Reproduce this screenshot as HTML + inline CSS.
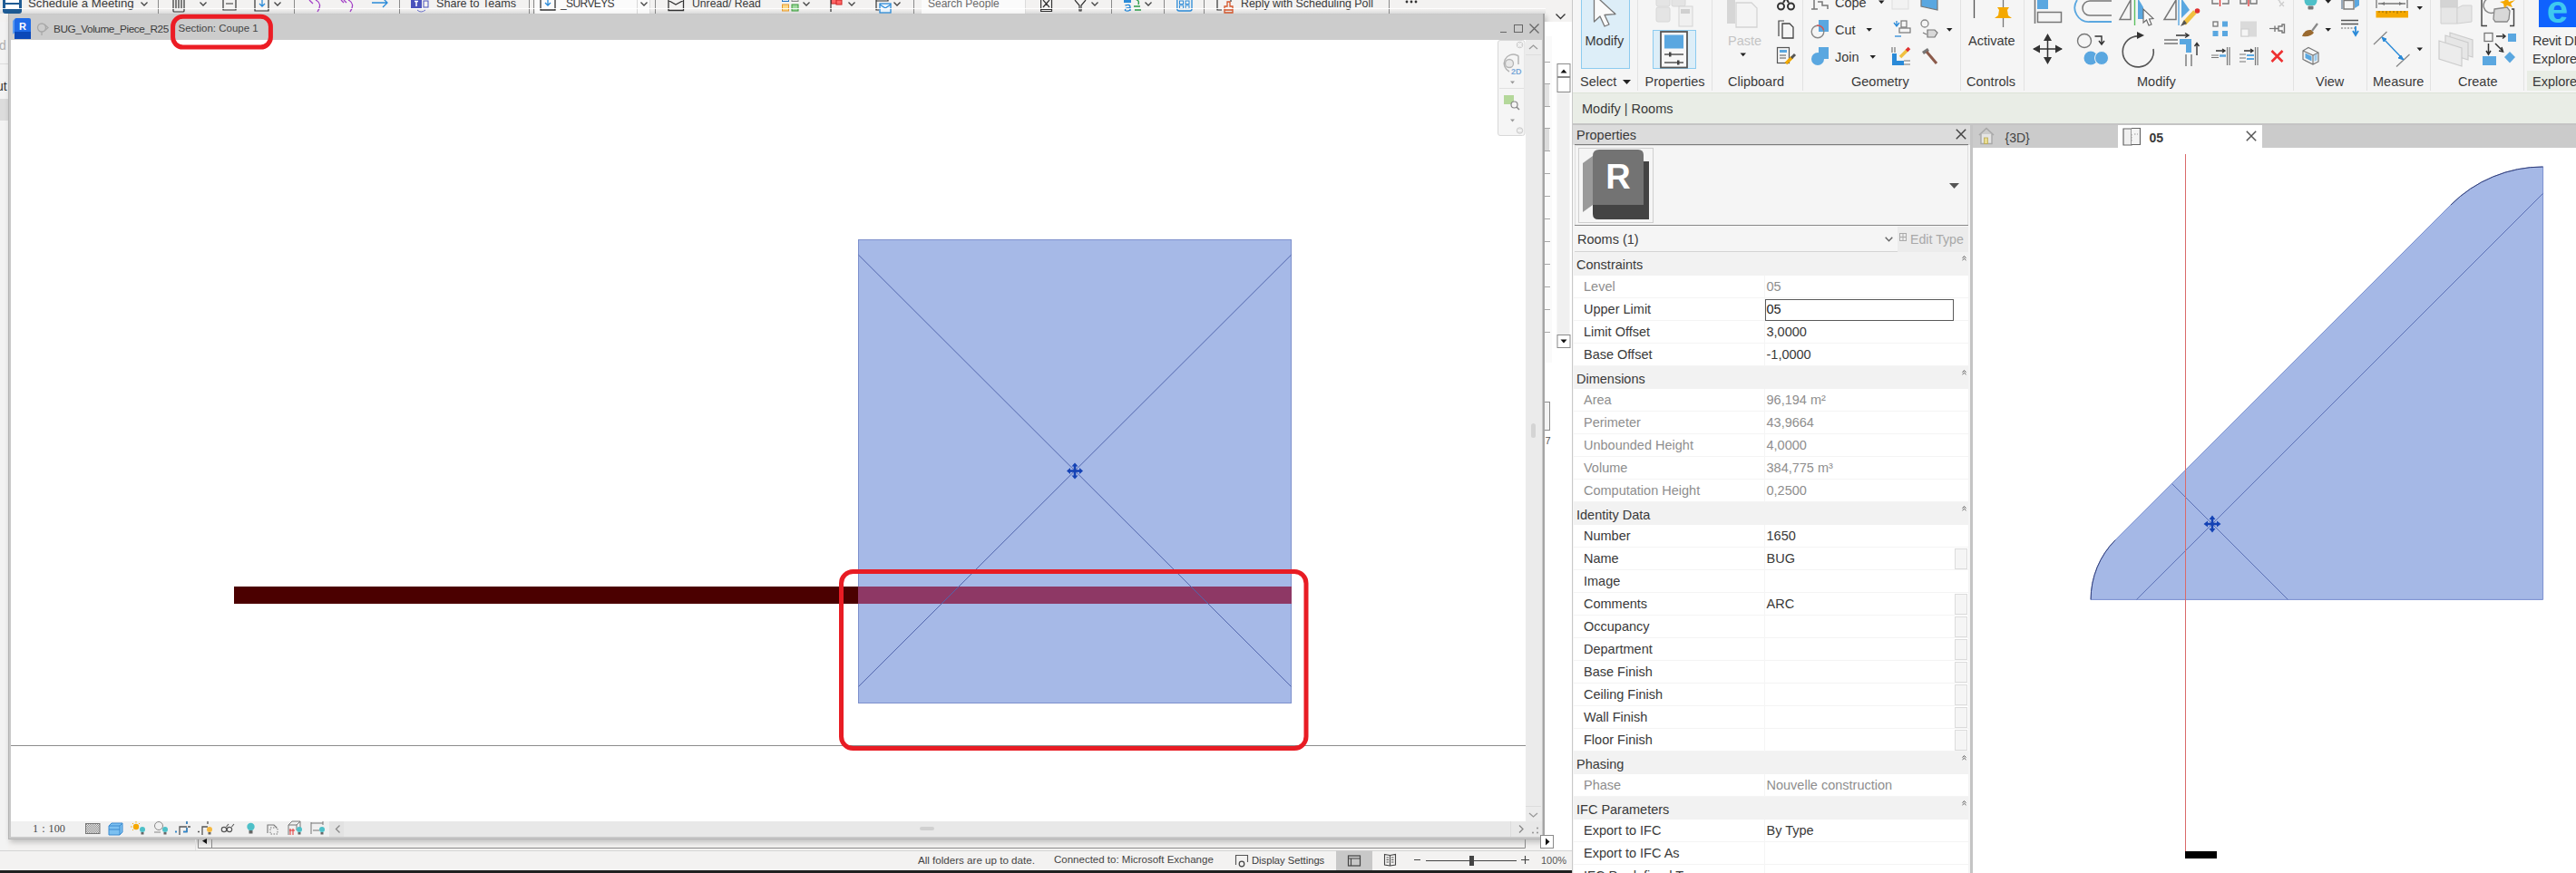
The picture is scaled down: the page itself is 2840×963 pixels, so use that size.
<!DOCTYPE html>
<html><head><meta charset="utf-8">
<style>
*{margin:0;padding:0;box-sizing:border-box}
html,body{width:2840px;height:963px;overflow:hidden;background:#f3f2f1;font-family:"Liberation Sans",sans-serif;color:#393939;position:relative}
.a{position:absolute}
.t{position:absolute;white-space:pre;line-height:1}
</style></head><body>

<!-- Outlook toolbar strip -->
<div class="a" id="olk" style="left:0;top:0;width:1733px;height:24px;background:#f3f2f1"></div>


<!-- outlook toolbar -->
<div class="a" style="left:0;top:10px;width:1704px;height:5px;background:linear-gradient(#f0efee,#e2e2e2)"></div>
<svg class="a" style="left:3px;top:0" width="21" height="15" viewBox="0 0 21 15"><path d="M0 0 L0 12 Q0 15 3 15 L18 15 Q21 15 21 12 L21 0Z" fill="#1e5b94"/><rect x="3" y="0" width="15" height="3" fill="#fff"/><rect x="3" y="5" width="15" height="5" fill="#fff"/></svg>
<div class="t" style="left:31px;top:-2.67px;font-size:13.2px;color:#393939;">Schedule a Meeting</div>
<svg class="a" style="left:155px;top:2px" width="8" height="5" viewBox="0 0 8 5"><path d="M0.5 0.5 L4 4 L7.5 0.5" fill="none" stroke="#444" stroke-width="1.3"/></svg>
<div class="a" style="left:174px;top:0;width:1px;height:15px;background:#8a8a8a"></div>
<svg class="a" style="left:190px;top:0" width="14" height="14" viewBox="0 0 14 14"><path d="M1 0 L1 12 Q1 13 2 13 L12 13 Q13 13 13 12 L13 0 M4 0 L4 10 M7 0 L7 10 M10 0 L10 10" fill="none" stroke="#333" stroke-width="1.2"/></svg>
<svg class="a" style="left:220px;top:2px" width="8" height="5" viewBox="0 0 8 5"><path d="M0.5 0.5 L4 4 L7.5 0.5" fill="none" stroke="#444" stroke-width="1.3"/></svg>
<svg class="a" style="left:245px;top:0" width="16" height="12" viewBox="0 0 16 12"><path d="M1 0 L1 11 L15 11 L15 0 M4 4 L12 4" fill="none" stroke="#333" stroke-width="1.2"/></svg>
<svg class="a" style="left:280px;top:0" width="18" height="13" viewBox="0 0 18 13"><path d="M1 0 L1 12 L16 12 L16 0" fill="none" stroke="#333" stroke-width="1.2"/><path d="M9 0 L9 7 M6 4 L9 7 L12 4" fill="none" stroke="#2a8ad8" stroke-width="1.3"/></svg>
<svg class="a" style="left:302px;top:2px" width="8" height="5" viewBox="0 0 8 5"><path d="M0.5 0.5 L4 4 L7.5 0.5" fill="none" stroke="#444" stroke-width="1.3"/></svg>
<div class="a" style="left:324px;top:0;width:1px;height:15px;background:#8a8a8a"></div>
<svg class="a" style="left:339px;top:0" width="19" height="14" viewBox="0 0 19 14"><path d="M2 0 L6 4 M9 0 Q17 4 11 13" fill="none" stroke="#a23fc6" stroke-width="1.3"/></svg>
<svg class="a" style="left:374px;top:0" width="20" height="14" viewBox="0 0 20 14"><path d="M2 0 L5 3 M5 0 L8 3 M10 0 Q18 4 12 13" fill="none" stroke="#a23fc6" stroke-width="1.3"/></svg>
<svg class="a" style="left:410px;top:0" width="19" height="10" viewBox="0 0 19 10"><path d="M0 3 L17 3 M12 -2 L17 3 L12 8" fill="none" stroke="#2a8ad8" stroke-width="1.3"/></svg>
<div class="a" style="left:440px;top:0;width:1px;height:15px;background:#8a8a8a"></div>
<svg class="a" style="left:453px;top:0" width="21" height="15" viewBox="0 0 21 15"><rect x="0" y="0" width="12" height="9" fill="#4b53bc"/><rect x="14" y="1" width="5" height="7" fill="none" stroke="#4b53bc" stroke-width="1"/><path d="M7 11 Q11 15 16 11" fill="none" stroke="#6b72cc" stroke-width="1"/><path d="M4 1.5 L8 1.5 M6 1.5 L6 7" stroke="#fff" stroke-width="1.5"/></svg>
<div class="t" style="left:481px;top:-2.17px;font-size:12.6px;color:#393939;">Share to Teams</div>
<div class="a" style="left:583px;top:0;width:1px;height:15px;background:#8a8a8a"></div>
<div class="a" style="left:588px;top:0;width:1px;height:15px;background:#8a8a8a"></div>
<div class="a" style="left:590px;top:0;width:127px;height:15px;background:#fbfbfb;border-right:1px solid #dcdcdc"></div>
<svg class="a" style="left:595px;top:0" width="19" height="13" viewBox="0 0 19 13"><path d="M1 0 L1 11 L17 11 L17 0" fill="none" stroke="#333" stroke-width="1.3"/><path d="M9 0 L9 6 M6 3 L9 6 L12 3" fill="none" stroke="#2a8ad8" stroke-width="1.3"/></svg>
<div class="t" style="left:618px;top:-1.66px;font-size:12px;color:#393939;letter-spacing:-0.6px">_SURVEYS</div>
<div class="a" style="left:702px;top:0;width:1px;height:15px;background:#d8d8d8"></div>
<svg class="a" style="left:706px;top:2px" width="8" height="5" viewBox="0 0 8 5"><path d="M0.5 0.5 L4 4 L7.5 0.5" fill="none" stroke="#444" stroke-width="1.3"/></svg>
<div class="a" style="left:722px;top:0;width:1px;height:15px;background:#8a8a8a"></div>
<svg class="a" style="left:736px;top:0" width="19" height="13" viewBox="0 0 19 13"><path d="M1 0 L1 11.5 L17.5 11.5 L17.5 0 M1 0.5 L9 5 L17.5 0.5" fill="none" stroke="#333" stroke-width="1.3"/></svg>
<div class="t" style="left:763px;top:-1.83px;font-size:12.2px;color:#393939;">Unread/ Read</div>
<svg class="a" style="left:862px;top:0" width="20" height="14" viewBox="0 0 20 14"><rect x="0.5" y="-2" width="7" height="3.5" fill="#d8e8f8" stroke="#2a78c8"/><rect x="11" y="-2" width="7" height="3.5" fill="#ddd" stroke="#888"/><rect x="0.5" y="5" width="7" height="7" fill="#fbd98a" stroke="#e89a30"/><rect x="11" y="5" width="7" height="7" fill="#9ed89e" stroke="#3a9a3a"/></svg>
<svg class="a" style="left:885px;top:2px" width="8" height="5" viewBox="0 0 8 5"><path d="M0.5 0.5 L4 4 L7.5 0.5" fill="none" stroke="#444" stroke-width="1.3"/></svg>
<svg class="a" style="left:915px;top:0" width="14" height="14" viewBox="0 0 14 14"><rect x="1.5" y="-2" width="6" height="6" fill="#f66" stroke="#c22" stroke-width="1"/><rect x="7" y="0" width="6" height="5" fill="#f66" stroke="#c22" stroke-width="1"/><path d="M1 0 L1 13" stroke="#333" stroke-width="1.2"/></svg>
<svg class="a" style="left:935px;top:2px" width="8" height="5" viewBox="0 0 8 5"><path d="M0.5 0.5 L4 4 L7.5 0.5" fill="none" stroke="#444" stroke-width="1.3"/></svg>
<svg class="a" style="left:965px;top:0" width="18" height="15" viewBox="0 0 18 15"><path d="M1 0 L1 11 L4 11 M1 1 L14 1 L14 0" fill="none" stroke="#333" stroke-width="1.2"/><rect x="5" y="4" width="12" height="10" fill="#e8f3fb" stroke="#2a8ad8" stroke-width="1.3"/><path d="M5 5 L11 9 L17 5" fill="none" stroke="#2a8ad8" stroke-width="1.2"/></svg>
<svg class="a" style="left:985px;top:2px" width="8" height="5" viewBox="0 0 8 5"><path d="M0.5 0.5 L4 4 L7.5 0.5" fill="none" stroke="#444" stroke-width="1.3"/></svg>
<div class="a" style="left:1007px;top:0;width:1px;height:15px;background:#8a8a8a"></div>
<div class="a" style="left:1016px;top:0;width:115px;height:15px;background:#fbfbfb;border-right:1px solid #dcdcdc"></div>
<div class="t" style="left:1023px;top:-1.66px;font-size:12px;color:#6a6a6a;">Search People</div>
<svg class="a" style="left:1147px;top:0" width="14" height="14" viewBox="0 0 14 14"><path d="M0.6 0 L0.6 10.5 L12.5 10.5 L12.5 0 M0.6 10.5 L0.6 12.5 L12.5 12.5 L12.5 10.5 M3 0 L6.5 4 L10 0 M3 8 L6.5 4 L10 8" fill="none" stroke="#333" stroke-width="1.2"/></svg>
<svg class="a" style="left:1184px;top:0" width="14" height="14" viewBox="0 0 14 14"><path d="M1 0 L6 6 L6 12 L8 12 L8 6 L13 0" fill="none" stroke="#333" stroke-width="1.2"/></svg>
<svg class="a" style="left:1203px;top:2px" width="8" height="5" viewBox="0 0 8 5"><path d="M0.5 0.5 L4 4 L7.5 0.5" fill="none" stroke="#444" stroke-width="1.3"/></svg>
<div class="a" style="left:1225px;top:0;width:1px;height:15px;background:#8a8a8a"></div>
<svg class="a" style="left:1239px;top:0" width="20" height="13" viewBox="0 0 20 13"><rect x="0" y="0" width="8" height="3" fill="#2a8ad8"/><path d="M1.5 6 Q7 4 7 8 L7 12 M7 9 Q1 8 1.5 11.5 Q4 13 7 11" fill="none" stroke="#2a8ad8" stroke-width="1.4"/><path d="M10 -1 Q18 -1 16 5 M11 7 L18 7 M12 11 L19 11" fill="none" stroke="#2d9d4a" stroke-width="1.4"/></svg>
<svg class="a" style="left:1262px;top:2px" width="8" height="5" viewBox="0 0 8 5"><path d="M0.5 0.5 L4 4 L7.5 0.5" fill="none" stroke="#444" stroke-width="1.3"/></svg>
<div class="a" style="left:1283px;top:0;width:1px;height:15px;background:#8a8a8a"></div>
<svg class="a" style="left:1297px;top:0" width="18" height="13" viewBox="0 0 18 13"><path d="M0.8 0 L0.8 10 Q0.8 12 3 12 L15 12 Q17 12 17 10 L17 0" fill="none" stroke="#2a8ad8" stroke-width="1.3"/><rect x="3.5" y="1" width="4" height="3.5" fill="none" stroke="#2a8ad8" stroke-width="1"/><rect x="10" y="1" width="4" height="3.5" fill="none" stroke="#2a8ad8" stroke-width="1"/><rect x="3.5" y="6" width="4" height="3.5" fill="none" stroke="#2a8ad8" stroke-width="1"/><rect x="10" y="6" width="4" height="3.5" fill="none" stroke="#2a8ad8" stroke-width="1"/></svg>
<div class="a" style="left:1327px;top:0;width:1px;height:15px;background:#8a8a8a"></div>
<svg class="a" style="left:1341px;top:0" width="20" height="15" viewBox="0 0 20 15"><path d="M1 0 L1 11 L6 11 M16 0 L16 2" fill="none" stroke="#333" stroke-width="1.2"/><path d="M9 14 L9 7 L12 7 L12 2 L15 2 L15 7 L18 7 L18 14 Z M9 11 L18 11" fill="none" stroke="#d5552a" stroke-width="1.3"/></svg>
<div class="t" style="left:1368px;top:-2.00px;font-size:12.4px;color:#393939;">Reply with Scheduling Poll</div>
<div class="a" style="left:1531px;top:0;width:1px;height:15px;background:#8a8a8a"></div>
<svg class="a" style="left:1549px;top:0" width="14" height="5" viewBox="0 0 14 5"><circle cx="2" cy="2" r="1.4" fill="#333"/><circle cx="7" cy="2" r="1.4" fill="#333"/><circle cx="12" cy="2" r="1.4" fill="#333"/></svg>
<svg class="a" style="left:1715px;top:15px" width="11" height="7" viewBox="0 0 11 7"><path d="M0.5 0.5 L5.5 5.5 L10.5 0.5" fill="none" stroke="#333" stroke-width="1.3"/></svg>

<div class="a" style="left:0;top:9px;width:1704px;height:1px;background:rgba(255,255,255,.85)"></div>
<!-- Left background strip -->
<div class="a" style="left:0;top:24px;width:9px;height:914px;background:#f3f3f3"></div>
<div class="a" style="left:0;top:109px;width:9px;height:24px;background:#dcdcdc"></div>
<div class="a" style="left:0;top:70px;width:9px;height:1px;background:#dcdcdc"></div>
<div class="t" style="left:-1px;top:43px;font-size:14px;color:#b0b0b0">d</div>
<div class="t" style="left:-4px;top:88px;font-size:14px;color:#333">ut</div>


<!-- Revit document window -->
<div class="a" id="win" style="left:8.5px;top:15px;width:1694.5px;height:911px;background:#c9c9c9;border-left:1px solid #b4b4b4;border-right:2px solid #a4a4a4;border-bottom:1px solid #b4b4b4;box-shadow:2px 3px 6px rgba(0,0,0,.22)"></div>
<div class="a" id="title" style="left:11px;top:16px;width:1690px;height:28px;background:#cccccc"></div>
<div class="a" id="canvas" style="left:12px;top:44px;width:1670px;height:862px;background:#fff"></div>
<div class="a" id="vscroll" style="left:1682px;top:44px;width:18px;height:862px;background:#ebebeb"></div>
<div class="a" id="vcb" style="left:12px;top:906px;width:1688px;height:17px;background:#e8e8e8"></div>


<!-- main canvas drawing -->
<svg class="a" style="left:0;top:0" width="1740" height="963" viewBox="0 0 1740 963">
  <line x1="12" y1="822.5" x2="1682" y2="822.5" stroke="#8c8c8c" stroke-width="1"/>
  <rect x="946.5" y="264.5" width="477" height="511" fill="#a6b9e7" stroke="#7d90cc" stroke-width="1"/>
  <rect x="258" y="647" width="688" height="19" fill="#4b0000"/>
  <rect x="946" y="647" width="478" height="19" fill="#8e3865"/>
  <line x1="946.5" y1="281.2" x2="1423.5" y2="757.4" stroke="#5266ad" stroke-width="1"/>
  <line x1="946.5" y1="757.4" x2="1423.5" y2="281.2" stroke="#5266ad" stroke-width="1"/>
  <g transform="translate(1185,519.5)" fill="#1442b5">
    <rect x="-7" y="-1.3" width="14" height="2.6"/>
    <rect x="-1.3" y="-7" width="2.6" height="14"/>
    <path d="M-9 0 L-5 -3.5 L-5 3.5Z M9 0 L5 -3.5 L5 3.5Z M0 -9 L-3.5 -5 L3.5 -5Z M0 9 L-3.5 5 L3.5 5Z"/>
  </g>
  <rect x="927.5" y="630.5" width="512.5" height="195" rx="13" ry="13" fill="none" stroke="#e81c24" stroke-width="5"/>
  <rect x="190.6" y="18.3" width="107.8" height="33.8" rx="11" ry="11" fill="none" stroke="#ec1c24" stroke-width="5"/>
</svg>

<!-- title bar contents -->
<svg class="a" style="left:14px;top:20px" width="22" height="23" viewBox="0 0 22 23">
  <path d="M2 2 Q2 0 4 0 L18 0 Q20 0 20 2 L20 21 L3 21 Q2 21 2 20Z" fill="#1f6be8"/>
  <path d="M0 3 L2 1 L2 16 L0 18Z" fill="#5a9af0"/>
  <rect x="2" y="15" width="18" height="8" fill="#0b48b8"/>
  <text x="11" y="12.5" font-family="Liberation Sans" font-weight="bold" font-size="11" fill="#fff" text-anchor="middle">R</text>
</svg>
<svg class="a" style="left:40px;top:24px" width="14" height="16" viewBox="0 0 14 16">
  <circle cx="6" cy="6.5" r="4.5" fill="none" stroke="#a8a8a8" stroke-width="1.3"/>
  <path d="M9 3 L13 6.5 L9 10" fill="none" stroke="#a8a8a8" stroke-width="1.3"/>
  <line x1="6" y1="11" x2="6" y2="15" stroke="#a8a8a8" stroke-width="1.3"/>
</svg>
<div class="t" style="left:59px;top:26.5px;font-size:11.8px;color:#3c3c3c;letter-spacing:-0.45px">BUG_Volume_Piece_R25</div>
<div class="t" style="left:196.5px;top:26px;font-size:11.5px;color:#444">Section: Coupe 1</div>
<!-- window controls -->
<div class="a" style="left:1653.5px;top:34.5px;width:7px;height:1.3px;background:#666"></div>
<div class="a" style="left:1669px;top:26.5px;width:10px;height:9.5px;border:1.2px solid #666"></div>
<svg class="a" style="left:1686px;top:26px" width="11" height="11" viewBox="0 0 11 11"><path d="M0.5 0.5 L10.5 10.5 M10.5 0.5 L0.5 10.5" stroke="#666" stroke-width="1.3"/></svg>

<!-- right-of-window strip -->
<div class="a" style="left:1703px;top:24px;width:30px;height:914px;background:#fff"></div>
<!-- nav bar & right strip -->
<svg class="a" style="left:1640px;top:40px" width="100" height="360" viewBox="1640 40 100 360">
<rect x="1651.5" y="44.5" width="29.5" height="105" rx="2.5" fill="#f5f5f5" stroke="#d8d8d8" stroke-width="1"/>
<circle cx="1675.5" cy="49.5" r="3.3" fill="#e4e4e4" stroke="#c4c4c4" stroke-width="0.8"/><path d="M1673.5 47.5 L1677.5 51.5 M1677.5 47.5 L1673.5 51.5" stroke="#fff" stroke-width="1"/>
<path d="M1664 79 A8 8 0 1 1 1672.5 61 Q1674 61 1674 63 L1674 71" fill="none" stroke="#b4b4b4" stroke-width="1.5"/>
<circle cx="1664" cy="70" r="4.5" fill="#e8e8e8" stroke="#b4b4b4" stroke-width="1.3"/>
<text x="1666" y="82" font-family="Liberation Sans" font-weight="bold" font-size="9" fill="#7aa8d8">2D</text>
<path d="M1665 89.5 L1670 89.5 L1667.5 92.5Z" fill="#999"/>
<path d="M1653 97.5 L1680 97.5" stroke="#e0e0e0" stroke-width="1"/>
<rect x="1658" y="105" width="11" height="10" fill="#b4d89a"/>
<circle cx="1669.5" cy="115.5" r="3.5" fill="#f5f5f5" stroke="#888" stroke-width="1.2"/><path d="M1672 118 L1675 121" stroke="#888" stroke-width="1.5"/>
<path d="M1665 131.5 L1670 131.5 L1667.5 134.5Z" fill="#999"/>
<circle cx="1675.5" cy="144" r="3.3" fill="#e4e4e4" stroke="#c4c4c4" stroke-width="0.8"/><path d="M1673.5 144 L1677.5 144" stroke="#fff" stroke-width="1.2"/>
<rect x="1682" y="44" width="17" height="16.5" fill="#ececec"/>
<path d="M1682 60.5 L1699 60.5" stroke="#dedede" stroke-width="1"/>
<path d="M1686 54 L1690.5 50 L1695 54" fill="none" stroke="#999" stroke-width="1.3"/>
<rect x="1703" y="24" width="30" height="914" fill="#ffffff"/>
<rect x="1703" y="24" width="8" height="376" fill="#fafafa"/>
<rect x="1703" y="93" width="5" height="24" fill="#e2e2e2"/>
<rect x="1703" y="141" width="5" height="25" fill="#dcdcdc"/>
<path d="M1703 68.5 L1709 68.5 M1703 92.5 L1709 92.5 M1703 117.5 L1709 117.5 M1703 141.5 L1709 141.5 M1703 166.5 L1709 166.5 M1703 191.5 L1709 191.5 M1703 216.5 L1709 216.5 M1703 241.5 L1709 241.5 M1703 266.5 L1709 266.5 M1703 291.5 L1709 291.5 M1703 316.5 L1709 316.5 M1703 341.5 L1709 341.5 M1703 366.5 L1709 366.5" stroke="#a8a8a8" stroke-width="1"/>
<rect x="1716.5" y="70" width="14" height="310" fill="#f0f0f0"/>
<rect x="1717" y="70.5" width="14" height="14" fill="#fff" stroke="#8a8a8a" stroke-width="1"/>
<path d="M1720.5 80.5 L1724 76.5 L1727.5 80.5Z" fill="#111"/>
<rect x="1717" y="85.5" width="14" height="16" fill="#fff" stroke="#8a8a8a" stroke-width="1"/>
<rect x="1717" y="369.5" width="14" height="14" fill="#fff" stroke="#8a8a8a" stroke-width="1"/>
<path d="M1720.5 374.5 L1724 378.5 L1727.5 374.5Z" fill="#111"/>
</svg>

<div class="a" style="left:1733px;top:0;width:1px;height:963px;background:#c8c8c8"></div>

<!-- status bar -->
<div class="a" style="left:0;top:937.5px;width:1733px;height:22.5px;background:#f3f2f1;border-top:1px solid #d4d4d4"></div>
<div class="a" style="left:0;top:960px;width:1733px;height:3px;background:#202020"></div>

<div class="a" style="left:1688px;top:467px;width:5px;height:16px;border-radius:2.5px;background:#d4d4d4"></div>
<div class="a" style="left:1703px;top:443px;width:6px;height:32px;border:1px solid #8a8a8a;border-left:none;background:#f4f4f4"></div>
<div class="t" style="left:1703.5px;top:481px;font-size:11px;color:#555">7</div>
<!-- bottom: view control bar, scrollbars, status -->
<div class="a" style="left:12px;top:906px;width:351px;height:17px;background:#f0f0f0"></div>
<div class="a" style="left:363px;top:906px;width:16px;height:17px;background:#e2e2e2"></div>
<div class="a" style="left:1665px;top:906px;width:1px;height:17px;background:#dcdcdc"></div>
<div class="a" style="left:1682px;top:888.5px;width:17px;height:1px;background:#dcdcdc"></div>
<div class="a" style="left:1014px;top:912px;width:16px;height:3.5px;border-radius:2px;background:#d0d0d0"></div>
<div class="t" style="left:36px;top:908.47px;font-size:12.2px;color:#4a4a4a;font-family:'Liberation Serif',serif;word-spacing:1px">1 : 100</div>
<svg class="a" style="left:0;top:895px" width="1740" height="68" viewBox="0 895 1740 68">
<defs><pattern id="chk" width="2" height="2" patternUnits="userSpaceOnUse"><rect width="1" height="1" fill="#888"/><rect x="1" y="1" width="1" height="1" fill="#888"/></pattern></defs>
<rect x="94.5" y="908.5" width="15.5" height="11" fill="url(#chk)" stroke="#777" stroke-width="1"/>
<path d="M120 911 L123 908 L135 908 L135 918 L132 921 L120 921Z" fill="#7cc0f0" stroke="#3a8ad0" stroke-width="1"/><path d="M120 911 L132 911 L135 908 M132 911 L132 921 M120 915 L132 915" fill="none" stroke="#3a8ad0" stroke-width="1"/>
<circle cx="150" cy="912" r="3.2" fill="#f5a800"/><path d="M150 906 L150 907.5 M144 912 L145.5 912 M146 908 L147 909 M154 908 L153 909 M146 916 L147 915" stroke="#f5a800" stroke-width="1"/>
<circle cx="157" cy="915" r="3" fill="#4ec0c8"/><rect x="155.5" y="918" width="3" height="2.5" fill="#666"/>
<circle cx="175" cy="911" r="4.5" fill="#f0f0f0" stroke="#888" stroke-width="1"/><path d="M170 918 L177 918" stroke="#aaa" stroke-width="1.5"/>
<circle cx="182" cy="915" r="3" fill="#4ec0c8"/><rect x="180.5" y="918" width="3" height="2.5" fill="#666"/>
<path d="M193 917.5 L195 917.5 M198 921 L198 912 L206 912 M206 906 L206 909 M210 912 L207 912 M202 917.5 L206 917.5 L206 913" fill="none" stroke="#555" stroke-width="1.3"/><path d="M193 917.5 L195 917.5 M202 917.5 L206 917.5 L206 913 M206 906 L206 909" fill="none" stroke="#2a8ad8" stroke-width="1.3"/>
<path d="M218 917.5 L220 917.5 M223 921 L223 912 L229 912 M229 906 L229 909" fill="none" stroke="#555" stroke-width="1.3"/><circle cx="231" cy="915" r="3" fill="#f5b840"/><rect x="229.5" y="918" width="3" height="2.5" fill="#666"/>
<circle cx="247" cy="915" r="2.7" fill="none" stroke="#555" stroke-width="1.2"/><circle cx="253" cy="915" r="2.7" fill="none" stroke="#555" stroke-width="1.2"/><path d="M249.5 912 L252 909 M255.5 912 L258 909" stroke="#555" stroke-width="1.1"/>
<circle cx="276.5" cy="912" r="4.2" fill="#4ec0c8"/><rect x="274.5" y="916" width="4" height="3.5" fill="#666"/>
<path d="M295 919 L295 910 L302 910 L305 913" fill="none" stroke="#777" stroke-width="1.1"/><path d="M298 913 L306 913 L306 920 L298 920Z" fill="none" stroke="#777" stroke-width="1" stroke-dasharray="1.5 1.5"/>
<path d="M318 921 L318 910 L322 906 L331 906 L331 913 M318 910 L327 910 L331 906 M327 910 L327 916" fill="none" stroke="#777" stroke-width="1"/><path d="M319 916 L325 916 M320 914 L320 921 M323 914 L323 921" stroke="#e03030" stroke-width="1"/>
<circle cx="330" cy="915" r="3" fill="#4ec0c8"/><rect x="328.5" y="918" width="3" height="2.5" fill="#666"/>
<path d="M343 907 L343 920 M343 908 L356 908 M356 906 L356 910 M345 916 L352 916" fill="none" stroke="#777" stroke-width="1" /><circle cx="355" cy="915" r="3" fill="#4ec0c8"/><rect x="353.5" y="918" width="3" height="2.5" fill="#666"/>
<path d="M374.5 910.5 L370.5 914.5 L374.5 918.5" fill="none" stroke="#888" stroke-width="1.3"/>
<path d="M1675 910.5 L1679 914.5 L1675 918.5" fill="none" stroke="#888" stroke-width="1.3"/>
<circle cx="1690" cy="918.5" r="0.9" fill="#888"/><circle cx="1695" cy="918.5" r="0.9" fill="#888"/><circle cx="1695" cy="913.5" r="0.9" fill="#888"/>
<path d="M1686 897 L1690.5 901 L1695 897" fill="none" stroke="#999" stroke-width="1.3"/>
<!-- horizontal scrollbar below window -->
<path d="M215.5 926 L215.5 938" stroke="#e0e0e0" stroke-width="1"/>
<path d="M218.5 926 L218.5 935.5 L1681.5 935.5 L1681.5 926" fill="none" stroke="#8a8a8a" stroke-width="1"/>
<path d="M233.5 926 L233.5 935.5" stroke="#8a8a8a" stroke-width="1"/>
<path d="M223 927.5 L228 925 L228 931Z" fill="#111"/>
<rect x="1698.5" y="921.5" width="14" height="14" fill="#fff" stroke="#8a8a8a" stroke-width="1"/>
<path d="M1704 924.5 L1708.5 928.5 L1704 932.5Z" fill="#111"/>
<!-- status bar icons -->
<path d="M1362.5 954 L1362.5 943.5 L1375.5 943.5 L1375.5 951" fill="none" stroke="#555" stroke-width="1.1"/>
<circle cx="1369" cy="953" r="2.8" fill="#f3f2f1" stroke="#444" stroke-width="1.2"/>
<rect x="1473" y="938.5" width="40" height="21.5" fill="#c8c8c8"/>
<rect x="1486.5" y="944" width="13" height="11" fill="none" stroke="#444" stroke-width="1.2"/><path d="M1486.5 947 L1499.5 947 M1489.5 947 L1489.5 955" stroke="#444" stroke-width="1.1"/>
<path d="M1526.5 942.5 L1532.5 943.5 L1538.5 942.5 L1538.5 954 L1532.5 955 L1526.5 954Z M1532.5 943.5 L1532.5 955" fill="none" stroke="#444" stroke-width="1.1"/>
<path d="M1528.5 946 L1531 946 M1528.5 948.5 L1531 948.5 M1528.5 951 L1531 951 M1534 946 L1536.5 946 M1534 948.5 L1536.5 948.5 M1534 951 L1536.5 951" stroke="#444" stroke-width="0.9"/>
<path d="M1559 948.5 L1566 948.5 M1572 949.5 L1672 949.5 M1677 948.5 L1686 948.5 M1681.5 944 L1681.5 953" stroke="#444" stroke-width="1.1"/>
<rect x="1620" y="944" width="5" height="11" fill="#444"/>
</svg>
<div class="t" style="left:1012px;top:942.68px;font-size:11.6px;color:#444;">All folders are up to date.</div>
<div class="t" style="left:1162px;top:942.77px;font-size:11.5px;color:#444;">Connected to: Microsoft Exchange</div>
<div class="t" style="left:1380px;top:944.02px;font-size:11.2px;color:#393939;">Display Settings</div>
<div class="t" style="left:1699px;top:943.69px;font-size:11px;color:#555;">100%</div>

<!-- Ribbon -->
<div class="a" id="ribbon" style="left:1734px;top:0;width:1106px;height:102px;background:#f5f5f5"></div>
<div class="a" id="mrbar" style="left:1734px;top:102px;width:1106px;height:34px;background:#e9ede6;border-top:1px solid #dde3d8"></div>
<div class="a" style="left:1734px;top:136px;width:1106px;height:2px;background:#c4c4c4"></div>

<div class="t" style="left:1744px;top:112.73px;font-size:14.5px;color:#393939;">Modify | Rooms</div>

<!-- Properties panel -->
<div class="a" id="props" style="left:1734px;top:138px;width:438px;height:825px;background:#f5f5f5"></div>

<!-- ribbon content -->
<div class="a" style="left:1743px;top:0;width:54px;height:76px;background:#ddeef8;border:1px solid #8ccbef;border-top:none"></div>
<div class="a" style="left:1822px;top:33px;width:48px;height:43px;background:#ddeef8;border:1px solid #8ccbef"></div>
<div class="a" style="left:1805px;top:0;width:1px;height:100px;background:#e2e2e2"></div>
<div class="a" style="left:1886.5px;top:0;width:1px;height:100px;background:#e2e2e2"></div>
<div class="a" style="left:1986.5px;top:0;width:1px;height:100px;background:#e2e2e2"></div>
<div class="a" style="left:2160.5px;top:0;width:1px;height:100px;background:#e2e2e2"></div>
<div class="a" style="left:2231px;top:0;width:1px;height:100px;background:#e2e2e2"></div>
<div class="a" style="left:2528px;top:0;width:1px;height:100px;background:#e2e2e2"></div>
<div class="a" style="left:2608.5px;top:0;width:1px;height:100px;background:#e2e2e2"></div>
<div class="a" style="left:2679px;top:0;width:1px;height:100px;background:#e2e2e2"></div>
<div class="a" style="left:2782px;top:0;width:1px;height:100px;background:#e2e2e2"></div>
<div class="a" style="left:2786px;top:78px;width:54px;height:22px;background:#e9ede5"></div>
<div class="t" style="left:1742px;top:82.73px;font-size:14.5px;color:#3a3a3a;">Select</div>
<div class="t" style="left:1813.5px;top:82.73px;font-size:14.5px;color:#3a3a3a;">Properties</div>
<div class="t" style="left:1905px;top:82.73px;font-size:14.5px;color:#3a3a3a;">Clipboard</div>
<div class="t" style="left:2041px;top:82.73px;font-size:14.5px;color:#3a3a3a;">Geometry</div>
<div class="t" style="left:2168px;top:82.73px;font-size:14.5px;color:#3a3a3a;">Controls</div>
<div class="t" style="left:2356px;top:82.73px;font-size:14.5px;color:#3a3a3a;">Modify</div>
<div class="t" style="left:2553px;top:82.73px;font-size:14.5px;color:#3a3a3a;">View</div>
<div class="t" style="left:2616px;top:82.73px;font-size:14.5px;color:#3a3a3a;">Measure</div>
<div class="t" style="left:2710px;top:82.73px;font-size:14.5px;color:#3a3a3a;">Create</div>
<div class="t" style="left:2792px;top:82.73px;font-size:14.5px;color:#3a3a3a;">Explore</div>
<div class="t" style="left:1747.5px;top:38.23px;font-size:14.5px;color:#393939;">Modify</div>
<div class="t" style="left:1905px;top:37.73px;font-size:14.5px;color:#c4c4c4;">Paste</div>
<div class="t" style="left:2023px;top:-3.87px;font-size:14.5px;color:#393939;">Cope</div>
<div class="t" style="left:2023px;top:26.23px;font-size:14.5px;color:#393939;">Cut</div>
<div class="t" style="left:2023px;top:55.73px;font-size:14.5px;color:#393939;">Join</div>
<div class="t" style="left:2170px;top:37.73px;font-size:14.5px;color:#393939;">Activate</div>
<div class="t" style="left:2792px;top:37.73px;font-size:14.5px;color:#393939;;letter-spacing:-0.3px">Revit DI</div>
<div class="t" style="left:2792px;top:57.73px;font-size:14.5px;color:#393939;">Explore</div>
<svg class="a" style="left:1733px;top:0" width="1107" height="102" viewBox="1733 0 1107 102">
<defs><path id="tri" d="M0 0 L9 0 L4.5 5Z" fill="#222"/><path id="tri2" d="M0 0 L6.5 0 L3.25 3.8Z" fill="#222"/></defs>
<!-- select cursor -->
<path d="M1757.5 -6 L1757.5 24 L1764 18 L1769 29 L1774 27 L1769 16.5 L1781 15.5 Z" fill="#fafafa" stroke="#777" stroke-width="1.3" stroke-linejoin="round"/>
<use href="#tri" x="1789" y="88"/>
<!-- properties grayed top icon -->
<g fill="#e4e4e4" stroke="#d8d8d8" stroke-width="1"><rect x="1826" y="-6" width="15" height="13" rx="2"/><rect x="1843" y="-6" width="15" height="13" rx="2"/><rect x="1826" y="8" width="15" height="16" rx="2"/><rect x="1851" y="7" width="15" height="22" fill="#f0f0f0" stroke="#d4d4d4"/></g>
<rect x="1853" y="10" width="10" height="5" fill="#d0d0d0"/>
<!-- properties icon -->
<rect x="1831" y="35" width="29" height="39.5" fill="#f7f7f7" stroke="#555" stroke-width="1.8"/>
<rect x="1835" y="38.5" width="21" height="15" fill="#5aa7e0"/>
<path d="M1835 60 L1856 60 M1835 69 L1856 69" stroke="#555" stroke-width="1.3"/>
<rect x="1840" y="57.5" width="2.5" height="5" fill="#444"/><rect x="1849" y="66.5" width="2.5" height="5" fill="#444"/>
<!-- paste gray -->
<rect x="1904" y="-5" width="9" height="31" fill="#d6d6d6"/>
<path d="M1914 3 L1931 3 L1937 9 L1937 30 L1914 30Z" fill="#f4f4f4" stroke="#d4d4d4" stroke-width="1.3"/>
<use href="#tri2" x="1918.5" y="58.5"/>
<!-- scissors -->
<circle cx="1963.5" cy="7" r="3.5" fill="none" stroke="#333" stroke-width="2"/><circle cx="1974.5" cy="7" r="3.5" fill="none" stroke="#333" stroke-width="2"/>
<path d="M1966 3 L1970 -4 M1972 3 L1968 -4" stroke="#333" stroke-width="2"/>
<!-- copy -->
<path d="M1961 40 L1961 23 L1967 23" fill="none" stroke="#444" stroke-width="1.2"/>
<path d="M1965 26 L1973 26 L1977 30 L1977 42 L1965 42Z" fill="#f5f5f5" stroke="#444" stroke-width="1.3"/>
<!-- match type -->
<rect x="1959.5" y="52.5" width="13" height="17" fill="#f5f5f5" stroke="#555" stroke-width="1.2"/>
<rect x="1962" y="55" width="8" height="3" fill="#5aa7e0"/><path d="M1962 61 L1969 61 M1962 64 L1969 64" stroke="#555" stroke-width="1"/>
<path d="M1969 70 L1976 63" stroke="#f0a800" stroke-width="3.5"/><path d="M1975 64 L1979 60" stroke="#555" stroke-width="3"/>
<!-- cope -->
<path d="M1997 10 L2004 10 M2000 -3 L2000 10 M2004 2 L2009 2 L2009 6 L2015 6 L2015 10" fill="none" stroke="#777" stroke-width="1.5"/>
<use href="#tri2" x="2071" y="0.5"/>
<rect x="2086" y="-4" width="18" height="14" fill="#f2f2f2" stroke="#ddd"/>
<path d="M2118 -4 L2136 -4 L2136 11 L2118 7Z" fill="#5aa7e0" stroke="#777" stroke-width="1.2"/>
<!-- cut geometry -->
<rect x="2005" y="22" width="11" height="13" fill="#5aa7e0"/>
<circle cx="2004" cy="35" r="6.8" fill="none" stroke="#888" stroke-width="1.4"/>
<path d="M2003 28.2 A6.8 6.8 0 0 1 2010.5 33" fill="none" stroke="#e05050" stroke-width="1.4"/>
<use href="#tri2" x="2057.5" y="31"/>
<!-- wall join -->
<path d="M2091 23 L2091 29 M2088 25 L2091 29 L2094 25" stroke="#2a8ad8" stroke-width="1.3" fill="none"/>
<rect x="2096" y="23" width="6" height="7" fill="none" stroke="#777" stroke-width="1.2"/>
<rect x="2094" y="31" width="12" height="5" fill="none" stroke="#777" stroke-width="1.2"/>
<path d="M2089 40 L2096 40" stroke="#2a8ad8" stroke-width="1.3"/>
<circle cx="2122" cy="26" r="4" fill="none" stroke="#888" stroke-width="1.3"/>
<path d="M2120 36 L2124 38 M2125 33 L2133 33 L2136 36 L2133 41 L2125 41Z" fill="#d8d8d8" stroke="#777" stroke-width="1.2"/>
<use href="#tri2" x="2146" y="31"/>
<!-- join geometry -->
<rect x="2005" y="52" width="11" height="13" fill="#5aa7e0"/>
<circle cx="2004" cy="65" r="7" fill="#5aa7e0"/>
<use href="#tri2" x="2061.5" y="61"/>
<path d="M2086 52 L2086 58 M2089 52 L2089 58" stroke="#777" stroke-width="1.2"/>
<path d="M2086 59 L2091 59 L2091 67 L2099 67 L2099 72 L2086 72Z" fill="#2a8ad8"/>
<path d="M2095 63 L2103 55" stroke="#f0c040" stroke-width="3.5"/><path d="M2102 56 L2105 53" stroke="#e03030" stroke-width="3.5"/>
<path d="M2099 67 L2106 67 M2099 71 L2106 71" stroke="#777" stroke-width="1.2"/>
<path d="M2119 57 L2125 53 L2127 56 L2121 60Z" fill="#777"/><path d="M2124 57 L2135 70" stroke="#8b5a4a" stroke-width="3"/>
<!-- controls -->
<path d="M2176.5 -2 L2176.5 20" stroke="#555" stroke-width="1.3"/>
<path d="M2208.5 -2 L2208.5 30" stroke="#777" stroke-width="1.3"/>
<path d="M2202 8 L2215 8 L2213 11 L2214 17 L2218 20 L2199 20 L2203 17 L2204 11Z" fill="#f5a800"/>
<!-- align -->
<path d="M2243.5 0 L2243.5 26" stroke="#777" stroke-width="1.6"/>
<rect x="2246" y="-4" width="12" height="14" fill="#5aa7e0"/>
<rect x="2246.5" y="13.5" width="26" height="11" fill="#f5f5f5" stroke="#777" stroke-width="1.5"/>
<!-- offset -->
<path d="M2328 1 L2304 1 A8 8 0 0 0 2304 17 L2328 17" fill="none" stroke="#777" stroke-width="1.5"/>
<path d="M2328 24 L2304 24 A15.5 15.5 0 0 1 2290 0" fill="none" stroke="#5aa7e0" stroke-width="1.8"/>
<!-- mirror pick -->
<path d="M2337 21.5 L2349 21.5 L2349 0Z" fill="none" stroke="#777" stroke-width="1.5"/>
<path d="M2353.5 -2 L2353.5 28" stroke="#5cc060" stroke-width="1.4"/>
<path d="M2357 -2 L2363 8 L2363 21 L2357 21Z" fill="#5aa7e0"/>
<path d="M2363 10 L2363 25 L2366.5 22 L2369 28 L2372 27 L2369.5 21 L2374 20.5Z" fill="#fafafa" stroke="#666" stroke-width="1.1"/>
<!-- mirror draw -->
<path d="M2386 21.5 L2399 21.5 L2399 0Z" fill="none" stroke="#777" stroke-width="1.5"/>
<path d="M2402 -2 L2402 28" stroke="#5aa7e0" stroke-width="1.4"/>
<path d="M2405 -2 L2414 11 L2405 20Z" fill="#5aa7e0"/>
<path d="M2408 26 L2420 13" stroke="#f0c040" stroke-width="5"/><circle cx="2422.5" cy="12" r="2.8" fill="#e03030"/><path d="M2404 29 L2408 22 L2411 26Z" fill="#555"/>
<!-- move -->
<path d="M2257.5 39 L2257.5 69 M2242 54 L2273 54" stroke="#333" stroke-width="1.5"/>
<path d="M2257.5 37 L2253 45 L2262 45Z M2257.5 71 L2253 63 L2262 63Z M2241 54 L2249 49.5 L2249 58.5Z M2274 54 L2266 49.5 L2266 58.5Z" fill="#333"/>
<!-- copy -->
<circle cx="2298" cy="45" r="7.5" fill="none" stroke="#777" stroke-width="1.4"/>
<path d="M2309.5 40 L2317 40 L2317 48 M2314 45 L2317 49 L2320 45" fill="none" stroke="#333" stroke-width="1.4"/>
<circle cx="2305" cy="64" r="7.5" fill="#5aa7e0"/><circle cx="2317" cy="64" r="7.5" fill="#5aa7e0" stroke="#f5f5f5" stroke-width="1"/>
<!-- rotate -->
<path d="M2374 54 A17 17 0 1 1 2359 40" fill="none" stroke="#555" stroke-width="1.6"/>
<path d="M2356 35 L2364 39 L2356 43Z" fill="#333"/>
<!-- trim corner -->
<path d="M2386 44 L2401 44 M2386 48 L2401 48" stroke="#777" stroke-width="1.4"/>
<path d="M2403 43 L2416 43 L2416 58 L2410 58 L2410 49 L2403 49Z" fill="#5aa7e0"/>
<path d="M2410 60 L2410 73 M2416 60 L2416 73" stroke="#777" stroke-width="1.4"/>
<path d="M2399 39 L2412 39 M2409 36.5 L2413 39 L2409 41.5" fill="none" stroke="#333" stroke-width="1.4"/>
<path d="M2422 61 L2422 48 M2419.5 51 L2422 47.5 L2424.5 51" fill="none" stroke="#333" stroke-width="1.4"/>
<!-- split -->
<path d="M2439 -2 L2439 4 L2446 4 M2450 4 L2457 4 L2457 -2" fill="none" stroke="#777" stroke-width="1.4"/><path d="M2447.5 -2 L2447.5 7" stroke="#e03030" stroke-width="1.3"/>
<path d="M2470 -2 L2470 4 L2477 4 L2477 -2 M2481 -2 L2481 4 L2488 4 L2488 -2" fill="none" stroke="#777" stroke-width="1.4"/><path d="M2479 -2 L2479 7" stroke="#e03030" stroke-width="1.3"/>
<path d="M2510 -2 L2514 2 M2513 2 L2518 7 M2518 2 L2513 7" stroke="#ccc" stroke-width="1.3"/>
<!-- array -->
<rect x="2440" y="24" width="5" height="5" fill="none" stroke="#777" stroke-width="1.3"/>
<rect x="2450" y="23.5" width="6" height="6" fill="#5aa7e0"/><rect x="2439.5" y="34" width="6" height="6" fill="#5aa7e0"/><rect x="2450" y="34" width="6" height="6" fill="#5aa7e0"/>
<rect x="2470" y="23.5" width="18" height="17" fill="#dadada"/><rect x="2471" y="32" width="8" height="8" fill="#f5f5f5" stroke="#ccc"/>
<!-- pin -->
<path d="M2502 31.5 L2508 31.5" stroke="#777" stroke-width="1.2"/>
<path d="M2508 28.5 L2508 35 M2508 31.5 L2512 31.5 L2512 29 L2516 29 L2516 27 L2518.5 27 L2518.5 36 L2516 36 L2516 34 L2512 34 L2512 31.5" fill="none" stroke="#777" stroke-width="1.4"/>
<!-- trim single / multi -->
<path d="M2438 61 L2446 61 M2438 63.5 L2446 63.5" stroke="#777" stroke-width="1.1"/><path d="M2447 61.5 L2454 61.5" stroke="#5aa7e0" stroke-width="2.5"/>
<path d="M2455.5 52 L2455.5 72 M2458 52 L2458 72" stroke="#777" stroke-width="1.2"/>
<path d="M2443 56 L2453 56 M2450 54 L2453 56 L2450 58" fill="none" stroke="#333" stroke-width="1.3"/>
<path d="M2469 60 L2476 60 M2469 64 L2476 64 M2469 68 L2476 68" stroke="#777" stroke-width="1.2"/><path d="M2477 61 L2485 61 M2477 65 L2485 65" stroke="#5aa7e0" stroke-width="2.2"/>
<path d="M2486.5 52 L2486.5 72 M2489 52 L2489 72" stroke="#777" stroke-width="1.2"/>
<path d="M2474 56 L2484 56 M2481 54 L2484 56 L2481 58" fill="none" stroke="#333" stroke-width="1.3"/>
<!-- delete -->
<path d="M2504.5 56 L2516.5 68 M2516.5 56 L2504.5 68" stroke="#ee3030" stroke-width="2.6"/>
<!-- view -->
<path d="M2540.5 -3 L2554.5 -3 L2554.5 0 Q2554.5 4 2551.5 6 L2543.5 6 Q2540.5 4 2540.5 0Z" fill="#4ec0c8"/><rect x="2544.5" y="6.5" width="6" height="4" rx="1" fill="#777"/>
<use href="#tri2" x="2563.5" y="0"/>
<rect x="2581" y="-2" width="2" height="12" fill="#9ab"/><rect x="2584" y="0.5" width="11" height="9.5" fill="#f5f5f5" stroke="#777" stroke-width="1.4"/><path d="M2596 -2 L2601 -2 L2601 6 L2596 9Z" fill="#5aa7e0"/>
<path d="M2538 40 Q2541 32 2548 33 L2551 36 Q2548 41 2538 40Z" fill="#9a6a30"/><path d="M2549 34 L2555 26" stroke="#888" stroke-width="2.2"/>
<use href="#tri2" x="2563.5" y="31"/>
<path d="M2581 22.5 L2600 22.5 M2581 26.5 L2600 26.5" stroke="#555" stroke-width="1.5"/><path d="M2581 31 L2597 31" stroke="#666" stroke-width="1" stroke-dasharray="2 1.5"/>
<path d="M2597 29 L2597 37 M2594 34 L2597 39 L2600 34" fill="none" stroke="#2a8ad8" stroke-width="1.8"/>
<path d="M2539 56 L2545 52.5 L2556 58 L2556 68 L2550 71 L2539 65.5Z M2539 56 L2550 61 L2556 58 M2550 61 L2550 71" fill="none" stroke="#777" stroke-width="1.2"/><path d="M2541.5 58.5 L2548.5 62 L2548.5 67.5 L2541.5 64Z" fill="#5aa7e0"/><path d="M2551.5 61 L2554.5 59.5 L2554.5 66.5 L2551.5 68Z" fill="#9ccbed"/>
<!-- measure -->
<path d="M2620 -2 L2620 9 M2654 -2 L2654 9 M2622 4 L2652 4" stroke="#777" stroke-width="1.3"/>
<path d="M2625 4 L2629 2 L2629 6Z M2649 4 L2645 2 L2645 6Z" fill="#777"/>
<rect x="2619.5" y="12" width="35.5" height="7.5" fill="#f5a800"/>
<path d="M2623 12 L2623 14 M2627 12 L2627 14 M2631 12 L2631 15 M2635 12 L2635 14 M2639 12 L2639 14 M2643 12 L2643 15 M2647 12 L2647 14 M2651 12 L2651 14" stroke="#7a5a00" stroke-width="0.8"/>
<use href="#tri2" x="2664.5" y="7"/>
<path d="M2617 49 L2631.5 35 M2642 73.5 L2656.5 60" stroke="#888" stroke-width="1.3"/>
<path d="M2627 42 L2649 65" stroke="#2a8ad8" stroke-width="1.4"/><path d="M2626 41 L2628 46 L2631 43Z M2650 66 L2644 64 L2647 61Z" fill="#2a8ad8" stroke="#2a8ad8" stroke-width="1"/>
<use href="#tri2" x="2664.5" y="52.5"/>
<!-- create (gray parts) -->
<g fill="#e6e6e6" stroke="#d0d0d0" stroke-width="1"><path d="M2691 -2 L2709 -2 L2709 26 L2691 26Z"/><path d="M2709 9 L2715 6 L2725 6 L2725 24 L2709 26Z"/><rect x="2691" y="-4" width="18" height="12" fill="#d4d4d4"/></g>
<g fill="#e6e6e6" stroke="#cccccc" stroke-width="1.2"><path d="M2701 36 L2726 44 L2726 63 L2701 55Z"/><path d="M2696 39 L2721 47 L2721 66 L2696 58Z"/><path d="M2689 45 L2714 53 L2714 73 L2689 65Z" fill="#ececec"/></g>
<!-- group -->
<path d="M2739 -2 L2736 -2 L2736 28.5 L2742 28.5 M2767 28.5 L2771.5 28.5 L2771.5 10 L2769 10" fill="none" stroke="#444" stroke-width="1.4"/>
<path d="M2749 14 A8 8 0 0 1 2744 -2" fill="none" stroke="#888" stroke-width="1.5"/>
<path d="M2750 10 L2764 8 L2767 12 L2766 21 L2764 24 L2751 24 L2749 21Z" fill="#d8d8d8" stroke="#888" stroke-width="1.3"/>
<path d="M2764 -4 L2766 2 L2773 0 L2768 4 L2770 8 L2764 6 L2761 9 L2760 4 L2756 2 L2761 1Z" fill="#f5a800"/>
<!-- create similar -->
<rect x="2739" y="36.5" width="9" height="9" fill="none" stroke="#777" stroke-width="1.3"/>
<path d="M2752 40 L2762 40 M2759 37.5 L2762 40 L2759 42.5" fill="none" stroke="#333" stroke-width="1.5"/>
<rect x="2765" y="37" width="9" height="9" fill="#5aa7e0"/>
<path d="M2743.5 48 L2743.5 59 M2741 56 L2743.5 60 L2746 56" fill="none" stroke="#333" stroke-width="1.5"/>
<path d="M2751 48 L2759 56 M2755 56 L2759.5 57 L2758 52" fill="none" stroke="#333" stroke-width="1.5"/>
<rect x="2737" y="62" width="15" height="10" fill="#5aa7e0"/>
<path d="M2767 57 L2773 63 L2767 69.5 L2761 63Z" fill="#5aa7e0"/>
<!-- explore icon -->
<rect x="2799" y="-2" width="41" height="32" fill="#0f62fe"/>
<text x="2819.5" y="25" font-family="Liberation Sans" font-weight="bold" font-size="42" fill="#3ec8f0" text-anchor="middle">e</text>
</svg>

<!-- properties content -->
<div class="a" style="left:1733px;top:138px;width:1px;height:825px;background:#c8c8c8"></div>
<div class="a" style="left:1734px;top:138px;width:438px;height:22px;background:#dcdcdc"></div>
<div class="a" style="left:1736px;top:159px;width:434px;height:1px;background:#7a7a7a"></div>
<div class="t" style="left:1738px;top:141.63px;font-size:14.5px;color:#393939;">Properties</div>
<svg class="a" style="left:2156px;top:142px" width="12" height="12" viewBox="0 0 12 12"><path d="M0.8 0.8 L11.2 11.2 M11.2 0.8 L0.8 11.2" stroke="#444" stroke-width="1.5"/></svg>
<div class="a" style="left:1736px;top:160px;width:434px;height:89px;background:#f5f5f5;border:1px solid #dedede;border-bottom:none"></div>
<div class="a" style="left:1736px;top:248px;width:434px;height:1.3px;background:#888"></div>
<div class="a" style="left:1740px;top:163px;width:83px;height:83px;border:1px solid #cfcfcf;background:#f5f5f5"></div>
<svg class="a" style="left:1742px;top:164px" width="80" height="80" viewBox="0 0 80 80">
<path d="M3 16 L14 8 L14 62 L3 70Z" fill="#9a9a9a"/>
<path d="M14 8 Q14 1 21 1 L64 1 Q70 1 70 7 L70 62 L14 62Z" fill="#737373"/>
<rect x="70" y="14" width="6" height="64" fill="#444"/>
<path d="M14 62 L76 62 L76 78 L20 78 Q14 78 14 72Z" fill="#444"/>
<text x="42" y="44" font-family="Liberation Sans" font-weight="bold" font-size="38" fill="#fff" text-anchor="middle">R</text>
</svg>
<svg class="a" style="left:2149px;top:202px" width="11" height="6" viewBox="0 0 11 6"><path d="M0 0 L11 0 L5.5 6Z" fill="#555"/></svg>
<div class="a" style="left:1736px;top:250px;width:356px;height:28px;background:#f5f5f5;border-bottom:1px solid #d4d4d4"></div>
<div class="t" style="left:1739px;top:257.2px;font-size:14.5px;color:#393939;">Rooms (1)</div>
<svg class="a" style="left:2078px;top:260.5px" width="9" height="6" viewBox="0 0 9 6"><path d="M0.7 0.7 L4.5 4.8 L8.3 0.7" fill="none" stroke="#666" stroke-width="1.4"/></svg>
<div class="a" style="left:2092px;top:250px;width:78px;height:28px;background:#ececec"></div>
<svg class="a" style="left:2094px;top:257px" width="8" height="9" viewBox="0 0 8 9"><rect x="0.5" y="0.5" width="7" height="8" fill="none" stroke="#aaa" stroke-width="1"/><path d="M0.5 4.5 L7.5 4.5 M4 0.5 L4 8.5" stroke="#aaa" stroke-width="1"/></svg>
<div class="t" style="left:2106px;top:256.7px;font-size:14.2px;color:#a8a8a8;">Edit Type</div>
<div class="a" style="left:1735px;top:278px;width:435px;height:26px;background:#f2f2f2"></div>
<div class="t" style="left:1738px;top:284.73px;font-size:14.5px;color:#393939;">Constraints</div>
<svg class="a" style="left:2163px;top:282px" width="5" height="6" viewBox="0 0 5 6"><path d="M0.5 2.5 L2.5 0.7 L4.5 2.5 M0.5 5 L2.5 3.2 L4.5 5" fill="none" stroke="#555" stroke-width="1"/></svg>
<div class="a" style="left:1735px;top:304px;width:435px;height:25px;background:#fff;border-bottom:1px solid #f4f4f4"></div>
<div class="a" style="left:1945px;top:304px;width:1px;height:25px;background:#f5f5f5"></div>
<div class="t" style="left:1746px;top:308.73px;font-size:14.5px;color:#8e8e8e;">Level</div>
<div class="t" style="left:1947.5px;top:308.73px;font-size:14.5px;color:#8e8e8e;">05</div>
<div class="a" style="left:1735px;top:329px;width:435px;height:25px;background:#fff;border-bottom:1px solid #f4f4f4"></div>
<div class="a" style="left:1945px;top:329px;width:1px;height:25px;background:#f5f5f5"></div>
<div class="t" style="left:1746px;top:333.73px;font-size:14.5px;color:#393939;">Upper Limit</div>
<div class="t" style="left:1947.5px;top:333.73px;font-size:14.5px;color:#393939;">05</div>
<div class="a" style="left:1735px;top:354px;width:435px;height:25px;background:#fff;border-bottom:1px solid #f4f4f4"></div>
<div class="a" style="left:1945px;top:354px;width:1px;height:25px;background:#f5f5f5"></div>
<div class="t" style="left:1746px;top:358.73px;font-size:14.5px;color:#393939;">Limit Offset</div>
<div class="t" style="left:1947.5px;top:358.73px;font-size:14.5px;color:#393939;">3,0000</div>
<div class="a" style="left:1735px;top:379px;width:435px;height:25px;background:#fff;border-bottom:1px solid #f4f4f4"></div>
<div class="a" style="left:1945px;top:379px;width:1px;height:25px;background:#f5f5f5"></div>
<div class="t" style="left:1746px;top:383.73px;font-size:14.5px;color:#393939;">Base Offset</div>
<div class="t" style="left:1947.5px;top:383.73px;font-size:14.5px;color:#393939;">-1,0000</div>
<div class="a" style="left:1735px;top:404px;width:435px;height:26px;background:#f2f2f2"></div>
<div class="t" style="left:1738px;top:410.73px;font-size:14.5px;color:#393939;">Dimensions</div>
<svg class="a" style="left:2163px;top:408px" width="5" height="6" viewBox="0 0 5 6"><path d="M0.5 2.5 L2.5 0.7 L4.5 2.5 M0.5 5 L2.5 3.2 L4.5 5" fill="none" stroke="#555" stroke-width="1"/></svg>
<div class="a" style="left:1735px;top:429px;width:435px;height:25px;background:#fff;border-bottom:1px solid #f4f4f4"></div>
<div class="a" style="left:1945px;top:429px;width:1px;height:25px;background:#f5f5f5"></div>
<div class="t" style="left:1746px;top:433.73px;font-size:14.5px;color:#8e8e8e;">Area</div>
<div class="t" style="left:1947.5px;top:433.73px;font-size:14.5px;color:#8e8e8e;">96,194 m²</div>
<div class="a" style="left:1735px;top:454px;width:435px;height:25px;background:#fff;border-bottom:1px solid #f4f4f4"></div>
<div class="a" style="left:1945px;top:454px;width:1px;height:25px;background:#f5f5f5"></div>
<div class="t" style="left:1746px;top:458.73px;font-size:14.5px;color:#8e8e8e;">Perimeter</div>
<div class="t" style="left:1947.5px;top:458.73px;font-size:14.5px;color:#8e8e8e;">43,9664</div>
<div class="a" style="left:1735px;top:479px;width:435px;height:25px;background:#fff;border-bottom:1px solid #f4f4f4"></div>
<div class="a" style="left:1945px;top:479px;width:1px;height:25px;background:#f5f5f5"></div>
<div class="t" style="left:1746px;top:483.73px;font-size:14.5px;color:#8e8e8e;">Unbounded Height</div>
<div class="t" style="left:1947.5px;top:483.73px;font-size:14.5px;color:#8e8e8e;">4,0000</div>
<div class="a" style="left:1735px;top:504px;width:435px;height:25px;background:#fff;border-bottom:1px solid #f4f4f4"></div>
<div class="a" style="left:1945px;top:504px;width:1px;height:25px;background:#f5f5f5"></div>
<div class="t" style="left:1746px;top:508.73px;font-size:14.5px;color:#8e8e8e;">Volume</div>
<div class="t" style="left:1947.5px;top:508.73px;font-size:14.5px;color:#8e8e8e;">384,775 m³</div>
<div class="a" style="left:1735px;top:529px;width:435px;height:25px;background:#fff;border-bottom:1px solid #f4f4f4"></div>
<div class="a" style="left:1945px;top:529px;width:1px;height:25px;background:#f5f5f5"></div>
<div class="t" style="left:1746px;top:533.73px;font-size:14.5px;color:#8e8e8e;">Computation Height</div>
<div class="t" style="left:1947.5px;top:533.73px;font-size:14.5px;color:#8e8e8e;">0,2500</div>
<div class="a" style="left:1735px;top:554px;width:435px;height:26px;background:#f2f2f2"></div>
<div class="t" style="left:1738px;top:560.73px;font-size:14.5px;color:#393939;">Identity Data</div>
<svg class="a" style="left:2163px;top:558px" width="5" height="6" viewBox="0 0 5 6"><path d="M0.5 2.5 L2.5 0.7 L4.5 2.5 M0.5 5 L2.5 3.2 L4.5 5" fill="none" stroke="#555" stroke-width="1"/></svg>
<div class="a" style="left:1735px;top:579px;width:435px;height:25px;background:#fff;border-bottom:1px solid #f4f4f4"></div>
<div class="a" style="left:1945px;top:579px;width:1px;height:25px;background:#f5f5f5"></div>
<div class="t" style="left:1746px;top:583.73px;font-size:14.5px;color:#393939;">Number</div>
<div class="t" style="left:1947.5px;top:583.73px;font-size:14.5px;color:#393939;">1650</div>
<div class="a" style="left:1735px;top:604px;width:435px;height:25px;background:#fff;border-bottom:1px solid #f4f4f4"></div>
<div class="a" style="left:1945px;top:604px;width:1px;height:25px;background:#f5f5f5"></div>
<div class="t" style="left:1746px;top:608.73px;font-size:14.5px;color:#393939;">Name</div>
<div class="t" style="left:1947.5px;top:608.73px;font-size:14.5px;color:#393939;">BUG</div>
<div class="a" style="left:2155px;top:605px;width:14px;height:23px;background:#f5f5f5;border:1px solid #dcdcdc"></div>
<div class="a" style="left:1735px;top:629px;width:435px;height:25px;background:#fff;border-bottom:1px solid #f4f4f4"></div>
<div class="a" style="left:1945px;top:629px;width:1px;height:25px;background:#f5f5f5"></div>
<div class="t" style="left:1746px;top:633.73px;font-size:14.5px;color:#393939;">Image</div>
<div class="a" style="left:1735px;top:654px;width:435px;height:25px;background:#fff;border-bottom:1px solid #f4f4f4"></div>
<div class="a" style="left:1945px;top:654px;width:1px;height:25px;background:#f5f5f5"></div>
<div class="t" style="left:1746px;top:658.73px;font-size:14.5px;color:#393939;">Comments</div>
<div class="t" style="left:1947.5px;top:658.73px;font-size:14.5px;color:#393939;">ARC</div>
<div class="a" style="left:2155px;top:655px;width:14px;height:23px;background:#f5f5f5;border:1px solid #dcdcdc"></div>
<div class="a" style="left:1735px;top:679px;width:435px;height:25px;background:#fff;border-bottom:1px solid #f4f4f4"></div>
<div class="a" style="left:1945px;top:679px;width:1px;height:25px;background:#f5f5f5"></div>
<div class="t" style="left:1746px;top:683.73px;font-size:14.5px;color:#393939;">Occupancy</div>
<div class="a" style="left:2155px;top:680px;width:14px;height:23px;background:#f5f5f5;border:1px solid #dcdcdc"></div>
<div class="a" style="left:1735px;top:704px;width:435px;height:25px;background:#fff;border-bottom:1px solid #f4f4f4"></div>
<div class="a" style="left:1945px;top:704px;width:1px;height:25px;background:#f5f5f5"></div>
<div class="t" style="left:1746px;top:708.73px;font-size:14.5px;color:#393939;">Department</div>
<div class="a" style="left:2155px;top:705px;width:14px;height:23px;background:#f5f5f5;border:1px solid #dcdcdc"></div>
<div class="a" style="left:1735px;top:729px;width:435px;height:25px;background:#fff;border-bottom:1px solid #f4f4f4"></div>
<div class="a" style="left:1945px;top:729px;width:1px;height:25px;background:#f5f5f5"></div>
<div class="t" style="left:1746px;top:733.73px;font-size:14.5px;color:#393939;">Base Finish</div>
<div class="a" style="left:2155px;top:730px;width:14px;height:23px;background:#f5f5f5;border:1px solid #dcdcdc"></div>
<div class="a" style="left:1735px;top:754px;width:435px;height:25px;background:#fff;border-bottom:1px solid #f4f4f4"></div>
<div class="a" style="left:1945px;top:754px;width:1px;height:25px;background:#f5f5f5"></div>
<div class="t" style="left:1746px;top:758.73px;font-size:14.5px;color:#393939;">Ceiling Finish</div>
<div class="a" style="left:2155px;top:755px;width:14px;height:23px;background:#f5f5f5;border:1px solid #dcdcdc"></div>
<div class="a" style="left:1735px;top:779px;width:435px;height:25px;background:#fff;border-bottom:1px solid #f4f4f4"></div>
<div class="a" style="left:1945px;top:779px;width:1px;height:25px;background:#f5f5f5"></div>
<div class="t" style="left:1746px;top:783.73px;font-size:14.5px;color:#393939;">Wall Finish</div>
<div class="a" style="left:2155px;top:780px;width:14px;height:23px;background:#f5f5f5;border:1px solid #dcdcdc"></div>
<div class="a" style="left:1735px;top:804px;width:435px;height:25px;background:#fff;border-bottom:1px solid #f4f4f4"></div>
<div class="a" style="left:1945px;top:804px;width:1px;height:25px;background:#f5f5f5"></div>
<div class="t" style="left:1746px;top:808.73px;font-size:14.5px;color:#393939;">Floor Finish</div>
<div class="a" style="left:2155px;top:805px;width:14px;height:23px;background:#f5f5f5;border:1px solid #dcdcdc"></div>
<div class="a" style="left:1735px;top:829px;width:435px;height:26px;background:#f2f2f2"></div>
<div class="t" style="left:1738px;top:835.73px;font-size:14.5px;color:#393939;">Phasing</div>
<svg class="a" style="left:2163px;top:833px" width="5" height="6" viewBox="0 0 5 6"><path d="M0.5 2.5 L2.5 0.7 L4.5 2.5 M0.5 5 L2.5 3.2 L4.5 5" fill="none" stroke="#555" stroke-width="1"/></svg>
<div class="a" style="left:1735px;top:854px;width:435px;height:25px;background:#fff;border-bottom:1px solid #f4f4f4"></div>
<div class="a" style="left:1945px;top:854px;width:1px;height:25px;background:#f5f5f5"></div>
<div class="t" style="left:1746px;top:858.73px;font-size:14.5px;color:#8e8e8e;">Phase</div>
<div class="t" style="left:1947.5px;top:858.73px;font-size:14.5px;color:#8e8e8e;">Nouvelle construction</div>
<div class="a" style="left:1735px;top:879px;width:435px;height:26px;background:#f2f2f2"></div>
<div class="t" style="left:1738px;top:885.73px;font-size:14.5px;color:#393939;">IFC Parameters</div>
<svg class="a" style="left:2163px;top:883px" width="5" height="6" viewBox="0 0 5 6"><path d="M0.5 2.5 L2.5 0.7 L4.5 2.5 M0.5 5 L2.5 3.2 L4.5 5" fill="none" stroke="#555" stroke-width="1"/></svg>
<div class="a" style="left:1735px;top:904px;width:435px;height:25px;background:#fff;border-bottom:1px solid #f4f4f4"></div>
<div class="a" style="left:1945px;top:904px;width:1px;height:25px;background:#f5f5f5"></div>
<div class="t" style="left:1746px;top:908.73px;font-size:14.5px;color:#393939;">Export to IFC</div>
<div class="t" style="left:1947.5px;top:908.73px;font-size:14.5px;color:#393939;">By Type</div>
<div class="a" style="left:1735px;top:929px;width:435px;height:25px;background:#fff;border-bottom:1px solid #f4f4f4"></div>
<div class="a" style="left:1945px;top:929px;width:1px;height:25px;background:#f5f5f5"></div>
<div class="t" style="left:1746px;top:933.73px;font-size:14.5px;color:#393939;">Export to IFC As</div>
<div class="a" style="left:1735px;top:954px;width:435px;height:25px;background:#fff;border-bottom:1px solid #f4f4f4"></div>
<div class="a" style="left:1945px;top:954px;width:1px;height:25px;background:#f5f5f5"></div>
<div class="t" style="left:1746px;top:958.73px;font-size:14.5px;color:#393939;">IFC Predefined Type</div>
<div class="a" style="left:1946px;top:330px;width:208px;height:24px;border:1px solid #5a5a5a;background:#fff"></div>
<div class="t" style="left:1947.5px;top:333.73px;font-size:14.5px;color:#222;">05</div>

<!-- Plan view -->
<div class="a" id="tabbar" style="left:2175px;top:138px;width:665px;height:24.5px;background:#cbcbcb"></div>
<div class="a" style="left:2172px;top:138px;width:3px;height:825px;background:#c4c4c4"></div>
<div class="a" id="plan" style="left:2175px;top:162.5px;width:665px;height:801px;background:#fff"></div>
<div class="a" style="left:2334.5px;top:138px;width:159px;height:25px;background:#fff"></div>
<svg class="a" style="left:2180px;top:140px" width="22" height="20" viewBox="0 0 22 20">
<path d="M2 9 L10 1.5 L18 9" fill="none" stroke="#a8a8a8" stroke-width="1.6"/>
<path d="M4 8 L4 18.5 L16 18.5 L16 8" fill="#e4e4e4" stroke="#a8a8a8" stroke-width="1.4"/>
<rect x="7.5" y="12" width="4" height="6.5" fill="#e8dc90" stroke="#b8a850" stroke-width="0.8"/>
</svg>
<svg class="a" style="left:2340px;top:140px" width="22" height="21" viewBox="0 0 22 21">
<path d="M1 2 L10 2 L10 20 L1 20Z" fill="#f0f0f0" stroke="#666" stroke-width="1.2"/>
<path d="M10 1.5 L19.5 1.5 L19.5 19.5 L10 19.5" fill="#f4f4f4" stroke="#666" stroke-width="1.2"/>
<path d="M10 8 L10 16 M13 8 L17 8" stroke="#999" stroke-width="1" stroke-dasharray="1.5 1.5"/>
</svg>
<svg class="a" style="left:2476px;top:144px" width="12" height="12" viewBox="0 0 12 12"><path d="M0.8 0.8 L11.2 11.2 M11.2 0.8 L0.8 11.2" stroke="#555" stroke-width="1.5"/></svg>
<div class="t" style="left:2210.5px;top:144.55px;font-size:14px;color:#444;">{3D}</div>
<div class="t" style="left:2369.5px;top:144.55px;font-size:14px;color:#393939;font-weight:bold">05</div>

<svg class="a" style="left:2175px;top:162px" width="665" height="801" viewBox="2175 162 665 801">
<path d="M2305.1 661.4 A93 93 0 0 1 2332.2 595.6 L2701.85 226.15 A143.9 143.9 0 0 1 2803.6 184 L2803.6 661.4 Z" fill="#a5b8e6" stroke="#7a8fcf" stroke-width="1"/>
<path d="M2305.1 661.4 A93 93 0 0 1 2332.2 595.6 M2701.85 226.15 A143.9 143.9 0 0 1 2803.6 184" fill="none" stroke="#33407a" stroke-width="1"/>
<line x1="2355.5" y1="661.4" x2="2803.6" y2="213.4" stroke="#5b70b5" stroke-width="1"/>
<line x1="2394.5" y1="533.5" x2="2522.4" y2="661.4" stroke="#5b70b5" stroke-width="1"/>
<line x1="2409.5" y1="170" x2="2409.5" y2="940" stroke="#da6a6a" stroke-width="1"/>
<rect x="2409" y="939" width="35" height="8" fill="#000"/>
<g transform="translate(2439,578)" fill="#1442b5">
<rect x="-7" y="-1.3" width="14" height="2.6"/>
<rect x="-1.3" y="-7" width="2.6" height="14"/>
<path d="M-9.5 0 L-5 -3.5 L-5 3.5Z M9.5 0 L5 -3.5 L5 3.5Z M0 -9.5 L-3.5 -5 L3.5 -5Z M0 9.5 L-3.5 5 L3.5 5Z"/>
</g>
</svg>


</body></html>
